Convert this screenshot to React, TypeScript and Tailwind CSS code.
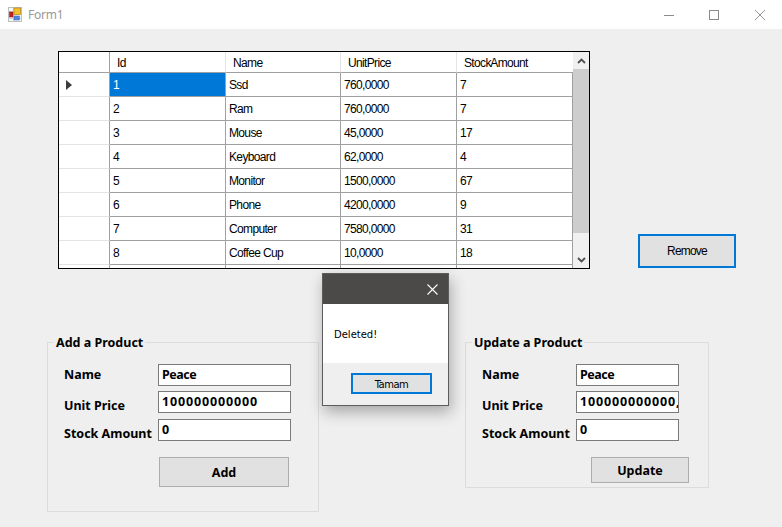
import React from "react";

const rows = [
  ["1", "Ssd", "760,0000", "7"],
  ["2", "Ram", "760,0000", "7"],
  ["3", "Mouse", "45,0000", "17"],
  ["4", "Keyboard", "62,0000", "4"],
  ["5", "Monitor", "1500,0000", "67"],
  ["6", "Phone", "4200,0000", "9"],
  ["7", "Computer", "7580,0000", "31"],
  ["8", "Coffee Cup", "10,0000", "18"],
];

const cols = "grid grid-cols-[51px_116px_115px_116px_116px]";

function AppIcon() {
  return (
    <svg width="14" height="15" viewBox="0 0 14 15" className="shrink-0">
      <rect x="0.5" y="0.5" width="13" height="14" fill="#f6f6f6" stroke="#bdbdbd" />
      <path d="M0.5 4.5H6M5.5 0.5V14.5M0.5 11.5H13.5" stroke="#d0d0d0" fill="none" />
      <rect x="1.5" y="5" width="3.5" height="5" fill="#c8201c" stroke="#8a1410" strokeWidth="0.5" />
      <rect x="6" y="1" width="6.5" height="6.5" fill="#f5c02a" stroke="#b08414" strokeWidth="0.7" />
      <rect x="6" y="9" width="5.5" height="4" fill="#4f86e0" stroke="#3a68b8" strokeWidth="0.5" />
    </svg>
  );
}

function Field({ value, digits }: { value: string; digits?: boolean }) {
  return (
    <input
      readOnly
      value={value}
      className={`block h-[22px] w-full min-w-0 border border-[#7a7a7a] bg-white pl-[3px] pr-0 pb-[1px] text-[12.5px] font-bold text-black outline-none [font-family:'Noto_Sans',sans-serif] ${
        digits ? "tracking-[0.85px]" : "tracking-[-0.5px]"
      }`}
    />
  );
}

function Group({
  title,
  width,
  height,
  name,
  price,
  button,
  btnClass,
}: {
  title: string;
  width: string;
  height: string;
  name: string;
  price: string;
  button: string;
  btnClass: string;
}) {
  const labelClass =
    "w-[94px] shrink-0 text-[12.5px] font-bold leading-[14px] text-black [font-family:'Noto_Sans',sans-serif]";
  const fieldWidth = btnClass === "add" ? "w-[133px]" : "w-[103px]";
  return (
    <section className={`${width} ${height} border border-[#dcdcdc]`}>
      <h2 className="ml-[6px] -mt-[7px] w-fit bg-[#efefef] px-[2px] text-[12.5px] font-bold leading-[14px] text-black [font-family:'Noto_Sans',sans-serif]">
        {title}
      </h2>
      <div className="ml-[16px] mt-[14px] flex flex-col">
        <div className="flex items-start">
          <span className={`${labelClass} pt-[4px]`}>Name</span>
          <div className={fieldWidth}>
            <Field value={name} />
          </div>
        </div>
        <div className="mt-[5px] flex items-start">
          <span className={`${labelClass} pt-[8px]`}>Unit Price</span>
          <div className={fieldWidth}>
            <Field value={price} digits />
          </div>
        </div>
        <div className="mt-[6px] flex items-start">
          <span className={`${labelClass} pt-[8px]`}>Stock Amount</span>
          <div className={fieldWidth}>
            <Field value="0" digits />
          </div>
        </div>
      </div>
      <button
        className={
          btnClass === "add"
            ? "ml-[111px] mt-[16px] block h-[30px] w-[130px] border border-[#adadad] bg-[#e1e1e1] pt-[2px] text-[12.5px] font-bold text-black [font-family:'Noto_Sans',sans-serif]"
            : "ml-[125px] mt-[16px] block h-[26px] w-[98px] border border-[#adadad] bg-[#e1e1e1] pt-[2px] text-[12.5px] font-bold text-black [font-family:'Noto_Sans',sans-serif]"
        }
      >
        {button}
      </button>
    </section>
  );
}

export default function App() {
  return (
    <div className="relative h-[527px] w-[782px] overflow-hidden bg-[#efefef] [font-family:'Liberation_Sans',sans-serif]">
      {/* Title bar */}
      <header className="flex h-[29px] items-center bg-white pl-[8px]">
        <AppIcon />
        <span className="ml-[6px] text-[12px] tracking-[-0.2px] text-[#999999] [font-family:'Noto_Sans',sans-serif]">Form1</span>
        <div className="ml-auto flex items-center pr-[17px]">
          <svg width="10" height="10" viewBox="0 0 10 10" className="mr-[35px]">
            <path d="M0 5.5H10" stroke="#8a8a8a" fill="none" />
          </svg>
          <svg width="10" height="10" viewBox="0 0 10 10" className="mr-[36px]">
            <rect x="0.5" y="0.5" width="9" height="9" stroke="#8a8a8a" fill="none" />
          </svg>
          <svg width="10" height="10" viewBox="0 0 10 10">
            <path d="M0 0L10 10M10 0L0 10" stroke="#8a8a8a" fill="none" strokeWidth="0.9" />
          </svg>
        </div>
      </header>

      {/* Grid and Remove */}
      <div className="ml-[58px] mt-[22px] flex items-start">
        <div className="flex h-[218px] w-[532px] border border-black bg-white">
          <div className="w-[514px] shrink-0 overflow-hidden text-[12px] tracking-[-0.65px] text-black">
            <div className={`${cols} h-[21px] pt-0 leading-[18px] [word-spacing:-2.5px]`}>
              <div className="border-b border-r border-b-[#a0a0a0] border-r-[#a0a0a0]" />
              <div className="border-b border-r border-b-[#a0a0a0] border-r-[#e5e5e5] pl-[7px] pt-[2px]">Id</div>
              <div className="border-b border-r border-b-[#a0a0a0] border-r-[#e5e5e5] pl-[7px] pt-[2px]">Name</div>
              <div className="border-b border-r border-b-[#a0a0a0] border-r-[#e5e5e5] pl-[7px] pt-[2px]">UnitPrice</div>
              <div className="border-b border-b-[#a0a0a0] pl-[7px] pt-[2px]">Stock Amount</div>
            </div>
            {rows.map((r, i) => (
              <div key={r[0]} className={`${cols} h-[24px] leading-[22px]`}>
                <div className="flex items-center border-b border-r border-b-[#e3e3e3] border-r-[#a0a0a0] pl-[7px]">
                  {i === 0 && (
                    <svg width="6" height="10" viewBox="0 0 6 10">
                      <path d="M0 0L6 5L0 10Z" fill="#3c3c3c" />
                    </svg>
                  )}
                </div>
                {r.map((c, j) => (
                  <div
                    key={j}
                    className={`border-b border-r border-[#a0a0a0] pl-[3px] pt-[1px] ${
                      i === 0 && j === 0 ? "bg-[#0078d7] text-white" : ""
                    }`}
                  >
                    {c}
                  </div>
                ))}
              </div>
            ))}
            <div className={`${cols} h-[3px]`}>
              <div className="border-r border-[#a0a0a0]" />
              <div className="border-r border-[#a0a0a0]" />
              <div className="border-r border-[#a0a0a0]" />
              <div className="border-r border-[#a0a0a0]" />
              <div className="border-r border-[#a0a0a0]" />
            </div>
          </div>
          {/* Scrollbar */}
          <div className="flex h-full w-[16px] flex-col bg-[#f0f0f0]">
            <div className="flex h-[17px] shrink-0 items-center justify-center">
              <svg width="9" height="6" viewBox="0 0 9 6">
                <path d="M1 5L4.5 1.5L8 5" stroke="#505050" strokeWidth="1.8" fill="none" />
              </svg>
            </div>
            <div className="h-[164px] shrink-0 bg-[#cdcdcd]" />
            <div className="flex flex-1 items-end justify-center pb-[5px]">
              <svg width="9" height="6" viewBox="0 0 9 6">
                <path d="M1 1L4.5 4.5L8 1" stroke="#505050" strokeWidth="1.8" fill="none" />
              </svg>
            </div>
          </div>
        </div>
        <button className="ml-[48px] mt-[183px] h-[34px] w-[98px] border-2 border-[#0078d7] bg-[#e1e1e1] text-[12px] tracking-[-0.8px] text-black">
          Remove
        </button>
      </div>

      {/* Groups */}
      <div className="ml-[47px] mt-[73px] flex items-start">
        <Group
          title="Add a Product"
          width="w-[272px]"
          height="h-[170px]"
          name="Peace"
          price="100000000000"
          button="Add"
          btnClass="add"
        />
        <div className="ml-[146px]">
          <Group
            title="Update a Product"
            width="w-[244px]"
            height="h-[146px]"
            name="Peace"
            price="100000000000,"
            button="Update"
            btnClass="update"
          />
        </div>
      </div>

      {/* Message box */}
      <div className="absolute left-[322px] top-[273px] flex h-[133px] w-[127px] flex-col border border-[#5c5c5c] bg-white shadow-[2px_6px_14px_rgba(0,0,0,0.3)] [font-family:'DejaVu_Sans',sans-serif]">
        <div className="flex h-[30px] shrink-0 items-center justify-end bg-[#4b4a48] pr-[10px]">
          <svg width="11" height="11" viewBox="0 0 11 11">
            <path d="M0.5 0.5L10.5 10.5M10.5 0.5L0.5 10.5" stroke="#ffffff" strokeWidth="1.1" fill="none" />
          </svg>
        </div>
        <div className="h-[59px] shrink-0 pl-[11px] pt-[24px] text-[10px] leading-[13px] text-black">Deleted!</div>
        <div className="flex-1 bg-[#efefef] pl-[28px] pt-[10px]">
          <button className="block h-[21px] w-[81px] border-2 border-[#0078d7] bg-[#e1e1e1] pt-[1px] text-[10px] tracking-[-0.5px] text-black">
            Tamam
          </button>
        </div>
      </div>
    </div>
  );
}
